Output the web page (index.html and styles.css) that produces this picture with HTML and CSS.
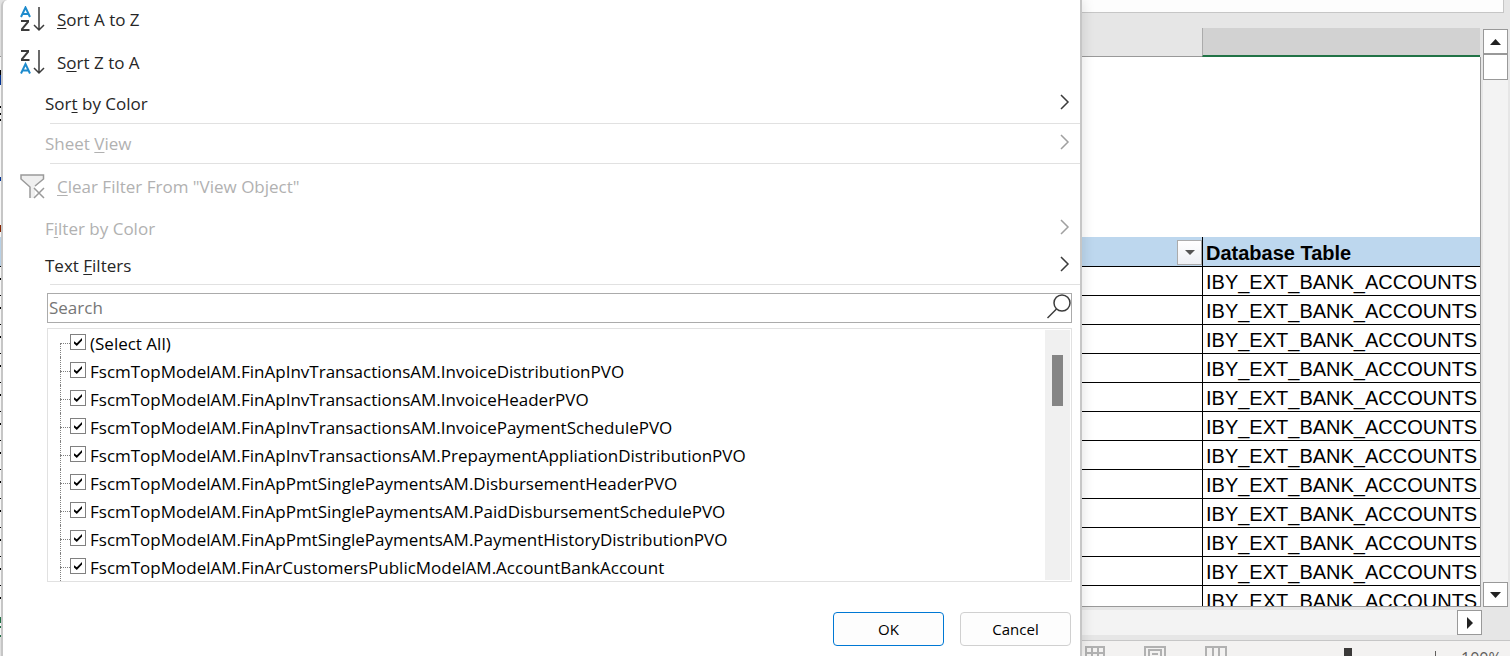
FILE: index.html
```
<!DOCTYPE html>
<html lang="en">
<head>
  <meta charset="UTF-8">
  <meta name="viewport" content="width=device-width, initial-scale=1.0">
  <title>View Object filter</title>
  <link rel="stylesheet" href="styles.css">
</head>
<body>
  <div class="sliver">
    <div class="sliver-head"></div>
    <div class="sliver-blank"></div>
    <div class="sliver-blue"></div>
    <div class="sliver-rows"></div>
    <div class="sliver-foot"></div>
  </div>

  <div class="menu">
    <button class="item first">
      <svg class="icon" width="26" height="28" viewBox="0 0 26 28" fill="none" stroke-width="2">
        <path d="M1 11 L5.500 1.500 L10 11 M2.500 8 H8.500" stroke="#1e8bcd"/>
        <path d="M1 15 H8 V16 L2 23 V24 H9.500" stroke="#3b3b3b"/>
        <path d="M19 1 V24 M14 19 L19 24 L24 19" stroke="#3b3b3b" stroke-width="1.500"/>
      </svg>
      <span><u>S</u>ort A to Z</span>
    </button>
    <button class="item second">
      <svg class="icon" width="26" height="28" viewBox="0 0 26 28" fill="none" stroke-width="2">
        <path d="M1 2 H8 V3 L2 10 V11 H9.500" stroke="#3b3b3b"/>
        <path d="M1 24.500 L5.500 15 L10 24.500 M2.500 21.500 H8.500" stroke="#1e8bcd"/>
        <path d="M19 1 V24 M14 19 L19 24 L24 19" stroke="#3b3b3b" stroke-width="1.500"/>
      </svg>
      <span>S<u>o</u>rt Z to A</span>
    </button>
    <button class="item plain">
      <span>Sor<u>t</u> by Color</span>
      <svg class="arrow" width="10" height="16" viewBox="0 0 10 16"><path d="M1 1 L8 8 L1 15"/></svg>
    </button>
    <hr>
    <button class="item plain" disabled>
      <span>Sheet <u>V</u>iew</span>
      <svg class="arrow" width="10" height="16" viewBox="0 0 10 16"><path d="M1 1 L8 8 L1 15"/></svg>
    </button>
    <hr>
    <button class="item clear" disabled>
      <svg class="icon" width="26" height="28" viewBox="0 0 26 28" fill="none" stroke="#9a9a9a" stroke-width="1.500">
        <path d="M1 2 H24 V6 L15 14 V25 H10 V14 L1 6 Z" fill="#efefef" stroke="none"/>
        <path d="M15 13 L23.500 6 V2 H1 V6 L10 14 V25"/>
        <path d="M14 15 L24 25 M24 15 L14 25"/>
      </svg>
      <span><u>C</u>lear Filter From "View Object"</span>
    </button>
    <button class="item plain short" disabled>
      <span>F<u>i</u>lter by Color</span>
      <svg class="arrow" width="10" height="16" viewBox="0 0 10 16"><path d="M1 1 L8 8 L1 15"/></svg>
    </button>
    <button class="item plain short">
      <span>Text <u>F</u>ilters</span>
      <svg class="arrow" width="10" height="16" viewBox="0 0 10 16"><path d="M1 1 L8 8 L1 15"/></svg>
    </button>
    <hr>

    <div class="search">
      <input type="text" placeholder="Search" aria-label="Search">
      <svg width="26" height="28" viewBox="0 0 26 28" fill="none" stroke="#3b3b3b" stroke-width="1.500">
        <circle cx="17" cy="9" r="8"/>
        <path d="M11.500 15 L2.500 24"/>
      </svg>
    </div>

    <div class="list">
      <div class="tree">
        <label><input type="checkbox" checked>(Select All)</label>
        <label><input type="checkbox" checked>FscmTopModelAM.FinApInvTransactionsAM.InvoiceDistributionPVO</label>
        <label><input type="checkbox" checked>FscmTopModelAM.FinApInvTransactionsAM.InvoiceHeaderPVO</label>
        <label><input type="checkbox" checked>FscmTopModelAM.FinApInvTransactionsAM.InvoicePaymentSchedulePVO</label>
        <label><input type="checkbox" checked>FscmTopModelAM.FinApInvTransactionsAM.PrepaymentAppliationDistributionPVO</label>
        <label><input type="checkbox" checked>FscmTopModelAM.FinApPmtSinglePaymentsAM.DisbursementHeaderPVO</label>
        <label><input type="checkbox" checked>FscmTopModelAM.FinApPmtSinglePaymentsAM.PaidDisbursementSchedulePVO</label>
        <label><input type="checkbox" checked>FscmTopModelAM.FinApPmtSinglePaymentsAM.PaymentHistoryDistributionPVO</label>
        <label><input type="checkbox" checked>FscmTopModelAM.FinArCustomersPublicModelAM.AccountBankAccount</label>
      </div>
      <div class="list-scroll"><div class="list-thumb"></div></div>
    </div>

    <div class="actions">
      <button class="ok">OK</button>
      <button>Cancel</button>
    </div>
  </div>

  <div class="excel">
    <div class="formula"></div>
    <div class="main">
      <div class="grid">
        <div class="columns">
          <div class="column"></div>
          <div class="column selected"></div>
        </div>
        <div class="cells">
          <table>
            <thead>
              <tr>
                <th><button class="filter" aria-label="Filter"><svg width="10" height="6" viewBox="0 0 10 6"><path d="M0 0 H10 L5 5 Z" fill="#555555"/></svg></button></th>
                <th>Database Table</th>
              </tr>
            </thead>
            <tbody>
              <tr><td></td><td>IBY_EXT_BANK_ACCOUNTS</td></tr>
              <tr><td></td><td>IBY_EXT_BANK_ACCOUNTS</td></tr>
              <tr><td></td><td>IBY_EXT_BANK_ACCOUNTS</td></tr>
              <tr><td></td><td>IBY_EXT_BANK_ACCOUNTS</td></tr>
              <tr><td></td><td>IBY_EXT_BANK_ACCOUNTS</td></tr>
              <tr><td></td><td>IBY_EXT_BANK_ACCOUNTS</td></tr>
              <tr><td></td><td>IBY_EXT_BANK_ACCOUNTS</td></tr>
              <tr><td></td><td>IBY_EXT_BANK_ACCOUNTS</td></tr>
              <tr><td></td><td>IBY_EXT_BANK_ACCOUNTS</td></tr>
              <tr><td></td><td>IBY_EXT_BANK_ACCOUNTS</td></tr>
              <tr><td></td><td>IBY_EXT_BANK_ACCOUNTS</td></tr>
              <tr><td></td><td>IBY_EXT_BANK_ACCOUNTS</td></tr>
            </tbody>
          </table>
        </div>
      </div>
      <div class="vscroll">
        <button aria-label="Scroll up"><svg width="11" height="6" viewBox="0 0 11 6"><path d="M0 6 H11 L5.500 0 Z" fill="#222222"/></svg></button>
        <div class="thumb"></div>
        <button class="down" aria-label="Scroll down"><svg width="11" height="6" viewBox="0 0 11 6"><path d="M0 0 H11 L5.500 6 Z" fill="#222222"/></svg></button>
      </div>
    </div>
    <div class="hscroll">
      <div class="hscroll-track">
        <button aria-label="Scroll right"><svg width="6" height="12" viewBox="0 0 6 12"><path d="M0 0 V12 L6 6 Z" fill="#222222"/></svg></button>
      </div>
    </div>
    <div class="status">
      <svg class="view" width="20" height="20" viewBox="0 0 20 20"><path d="M1 1 H19 V19 H1 Z M1 7 H19 M1 13 H19 M7 1 V19 M13 1 V19"/></svg>
      <svg class="view" width="22" height="20" viewBox="0 0 22 20"><path d="M1 1 H21 V19 H1 Z M5 19 V4 H17 V19 M8 8 H14 M8 11 H14"/></svg>
      <svg class="view" width="22" height="20" viewBox="0 0 22 20"><path d="M1 1 H21 V19 H1 Z M8 1 V14 M14 1 V14"/></svg>
      <input type="range" min="0" max="100" value="50" aria-label="Zoom">
      <div class="plus"></div>
      <span class="percent">100%</span>
    </div>
  </div>
</body>
</html>
```
FILE: styles.css
```
* {
  box-sizing: border-box;
}

body {
  margin: 0;
  height: 100vh;
  display: flex;
  overflow: hidden;
  background-color: #e6e6e6;
  font-family: "Open Sans", "Segoe UI", sans-serif;
  color: #262626;
}

button {
  font-family: inherit;
  color: inherit;
  padding: 0;
}

/* strip of the sheet left of the menu */
.sliver {
  flex: none;
  width: 1px;
  display: flex;
  flex-direction: column;
  background-color: #ffffff;
}

.sliver-head {
  height: 57px;
  background-color: #e6e6e6;
  border-bottom: 1px solid #999999;
}

.sliver-blank {
  height: 180px;
  background: linear-gradient(
    #ffffff 13px, #000000 13px 18px, #003399 18px 28px,
    #ffffff 28px 49px, #000000 49px 51px, #ffffff 51px 56px, #000000 56px 58px,
    #ffffff 58px 62px, #000000 62px 64px, #ffffff 64px 120px, #003399 120px 124px,
    #ffffff 124px 168px, #8b2500 168px 175px, #ffffff 175px
  );
}

.sliver-blue {
  height: 29px;
  background-color: #bdd7ee;
}

.sliver-rows {
  height: 340px;
  background: repeating-linear-gradient(#000000 0 1px, #ffffff 1px 12px, #000000 12px 14px, #ffffff 14px 29px);
}

.sliver-foot {
  flex: 1;
  background: linear-gradient(#ffffff 11px, #217346 11px 17px, #ffffff 17px 20px, #217346 20px 22px, #ffffff 22px 29px, #217346 29px 31px, #e6e6e6 31px);
}

/* filter menu */
.menu {
  flex: 1;
  min-width: 0;
  display: flex;
  flex-direction: column;
  background-color: #ffffff;
  border: solid #c6c6c6;
  border-width: 0 2px;
  border-top-left-radius: 6px;
  z-index: 1;
  box-shadow: 2px 0 12px rgba(0, 0, 0, 0.1);
}

.item {
  flex: none;
  height: 39px;
  display: flex;
  align-items: center;
  border: none;
  background: none;
  font-size: 17px;
  line-height: 24px;
  text-align: left;
}

.item.first {
  height: 40px;
  padding-left: 17px;
}

.item.second {
  height: 44px;
  padding: 2px 0 0 17px;
}

.item.clear {
  height: 46px;
  padding-left: 17px;
}

.item.plain {
  padding: 0 10px 0 42px;
  justify-content: space-between;
}

.item.short {
  height: 37px;
}

.item:disabled {
  color: #b1b1b1;
}

.item u {
  text-decoration-thickness: 1px;
  text-underline-offset: 2px;
}

.icon {
  margin-right: 11px;
}

.arrow {
  margin-bottom: 3px;
}

.arrow path {
  fill: none;
  stroke: #3b3b3b;
  stroke-width: 1.5;
}

.item:disabled .arrow path {
  stroke: #a0a0a0;
}

.menu hr {
  flex: none;
  width: auto;
  height: 1px;
  margin: 0 0 0 47px;
  border: none;
  background-color: #e1e1e1;
}

.search {
  flex: none;
  height: 30px;
  margin: 8px 8px 0 44px;
  display: flex;
  align-items: center;
  border: 1px solid #ababab;
}

.search input {
  flex: 1;
  min-width: 0;
  padding: 0 1px 2px;
  border: none;
  outline: none;
  font-family: inherit;
  font-size: 17px;
}

.search input::placeholder {
  color: #767676;
}

.list {
  flex: none;
  margin: 5px 8px 0 44px;
  display: flex;
  border: 1px solid #e1e1e1;
}

.tree {
  flex: 1;
  min-width: 0;
  margin-left: 12px;
  overflow: hidden;
}

.tree label {
  position: relative;
  height: 28px;
  display: flex;
  align-items: center;
  font-size: 17px;
  color: #000000;
  white-space: nowrap;
}

/* dotted branches of the tree */
.tree label::before {
  content: "";
  width: 10px;
  border-top: 1px dotted #808080;
}

.tree label::after {
  content: "";
  position: absolute;
  left: 0;
  top: 0;
  height: 100%;
  border-left: 1px dotted #808080;
}

.tree label:first-child::after {
  top: 50%;
  height: 50%;
}

.tree input {
  appearance: none;
  width: 16px;
  height: 16px;
  margin: 0 4px 2px 0;
  border: 1px solid #808080;
  background-color: #ffffff;
}

.tree input:checked::before {
  content: "";
  display: block;
  width: 8px;
  height: 8px;
  margin: 3px;
  background-color: #000000;
  clip-path: polygon(0 40%, 35% 65%, 100% 0, 100% 30%, 35% 100%, 0 70%);
}

.list-scroll {
  width: 25px;
  margin: 1px 1px 1px 0;
  padding-top: 25px;
  background-color: #f0f0f0;
}

.list-thumb {
  width: 11px;
  height: 51px;
  margin: 0 auto;
  background-color: #858585;
}

.actions {
  display: flex;
  justify-content: flex-end;
  gap: 16px;
  margin: 30px 9px 0;
}

.actions button {
  width: 111px;
  height: 34px;
  border: 1px solid #d0d0d0;
  border-radius: 4px;
  background-color: #fdfdfd;
  font-size: 15px;
  color: #000000;
}

.actions .ok {
  border-color: #0078d4;
}

/* worksheet */
.excel {
  flex: none;
  width: 428px;
  display: flex;
  flex-direction: column;
}

.formula {
  flex: none;
  height: 13px;
  margin-right: 6px;
  background-color: #fdfdfd;
  border: solid #c6c6c6;
  border-width: 0 1px 1px 0;
}

.main {
  flex: 1;
  min-height: 0;
  display: flex;
  gap: 2px;
}

.grid {
  flex: 1;
  min-width: 0;
  padding-top: 15px;
  display: flex;
  flex-direction: column;
}

.columns {
  flex: none;
  height: 29px;
  margin-right: 1px;
  display: flex;
}

.column {
  width: 120px;
  border-bottom: 1px solid #999999;
}

.column.selected {
  flex: 1;
  background-color: #d2d2d2;
  border-left: 1px solid #ababab;
  border-bottom: 2px solid #217346;
}

.cells {
  flex: 1;
  min-height: 0;
  padding-top: 180px;
  overflow: hidden;
  background-color: #ffffff;
  border: solid #999999;
  border-width: 0 1px 1px 0;
}

table {
  width: 100%;
  table-layout: fixed;
  border-collapse: separate;
  border-spacing: 0;
  font-family: "Liberation Sans", Arial, sans-serif;
  font-size: 20px;
  line-height: 26px;
  color: #000000;
}

th,
td {
  height: 29px;
  padding: 2px 0 0 3px;
  border-bottom: 1px solid #000000;
  text-align: left;
  white-space: nowrap;
}

th {
  height: 30px;
  background-color: #bdd7ee;
}

th:first-child,
td:first-child {
  width: 121px;
  padding: 0;
  border-right: 1px solid #000000;
}

.filter {
  width: 25px;
  height: 25px;
  margin: 2px 0 0 auto;
  display: flex;
  align-items: center;
  justify-content: center;
  border: 1px solid #ababab;
  background: linear-gradient(#ffffff, #eef0f5);
}

.vscroll {
  flex: none;
  width: 25px;
  margin: 16px 2px 0 0;
  display: flex;
  flex-direction: column;
  background-color: #f3f3f3;
}

.vscroll button,
.hscroll button {
  width: 25px;
  height: 25px;
  display: flex;
  align-items: center;
  justify-content: center;
  border: 1px solid #999999;
  background-color: #ffffff;
}

.thumb {
  height: 26px;
  border: 1px solid #999999;
  background-color: #ffffff;
}

.vscroll .down {
  margin-top: auto;
}

.hscroll {
  flex: none;
  padding: 3px 28px 5px 0;
}

.hscroll-track {
  display: flex;
  justify-content: flex-end;
  background-color: #f3f3f3;
}

.status {
  flex: none;
  height: 16px;
  padding: 5px 9px 0 3px;
  display: flex;
  align-items: flex-start;
  overflow: hidden;
  background-color: #f3f2f1;
  border-top: 1px solid #c6c6c6;
}

.view {
  flex: none;
  margin-right: 39px;
  fill: none;
  stroke: #b1b1b1;
  stroke-width: 2;
}

.status input {
  appearance: none;
  flex: none;
  width: 164px;
  height: 16px;
  margin: 2px 0 0;
  background: linear-gradient(#8a8a8a, #8a8a8a) center / 100% 1px no-repeat;
}

.status input::-webkit-slider-thumb {
  appearance: none;
  width: 8px;
  height: 16px;
  background-color: #3b3a39;
}

.plus {
  flex: none;
  width: 1px;
  height: 11px;
  margin: 5px 25px 0 5px;
  background-color: #605e5c;
}

.percent {
  font-size: 16px;
  line-height: 24px;
  color: #605e5c;
}
```
